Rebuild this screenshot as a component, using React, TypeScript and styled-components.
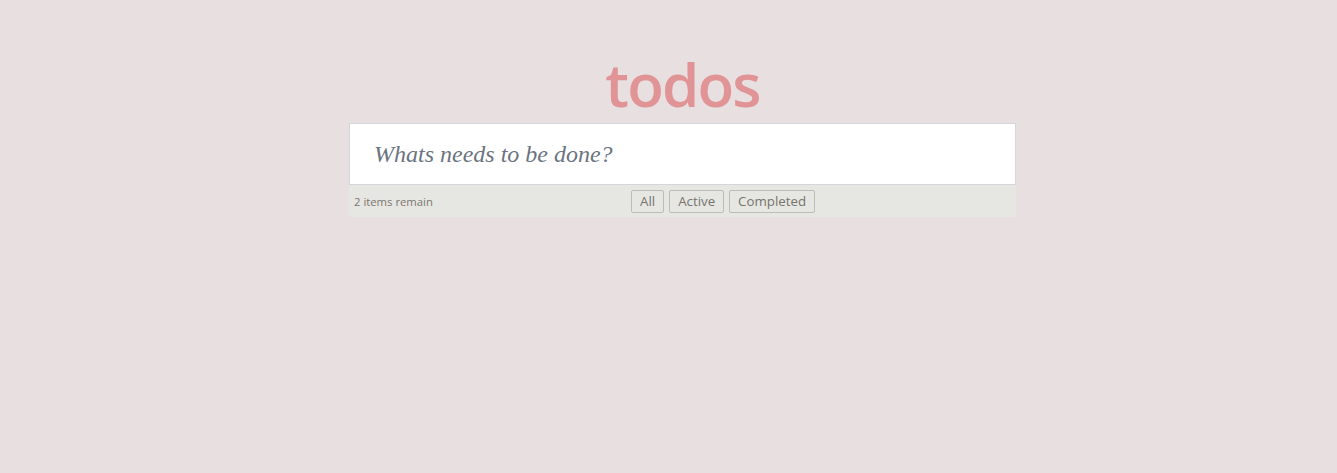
import React from 'react';
import styled, { createGlobalStyle } from 'styled-components';

const GlobalStyle = createGlobalStyle`
  html, body {
    margin: 0;
    padding: 0;
    background: #e8dfe1;
  }
`;

const Page = styled.div`
  min-height: 100vh;
  display: flex;
  flex-direction: column;
  align-items: center;
  padding: 48px 0 0 28px;
  box-sizing: border-box;
  font-family: 'Open Sans', 'Noto Sans', sans-serif;
`;

const Title = styled.h1`
  margin: 0 0 3px 0;
  font-size: 60px;
  font-weight: 600;
  line-height: 72px;
  color: #e09496;
  letter-spacing: -1.8px;
`;

const Card = styled.div`
  width: 667px;
`;

const NewTodo = styled.input`
  display: block;
  width: 100%;
  height: 62px;
  box-sizing: border-box;
  border: 1px solid #d3d6db;
  background: #fff;
  padding: 0 24px;
  font-family: 'Liberation Serif', 'DejaVu Serif', serif;
  font-style: italic;
  font-size: 24px;
  color: #5f6b78;
  outline: none;

  &::placeholder {
    color: #6b7480;
    opacity: 1;
  }
`;

const Footer = styled.div`
  display: flex;
  align-items: center;
  height: 32px;
  padding: 0 5px;
  background: #e6e6e2;
`;

const Count = styled.span`
  width: 277px;
  font-size: 11.3px;
  color: #7b7770;
`;

const Filters = styled.div`
  display: flex;
  gap: 5px;
`;

const FilterButton = styled.button`
  height: 23px;
  padding: 0 8px;
  border: 1px solid #bdbdb8;
  border-radius: 2px;
  background: transparent;
  font-family: 'Open Sans', 'Noto Sans', sans-serif;
  font-size: 13.3px;
  color: #77746e;
  cursor: pointer;
`;

const App = () => {
  const filters = ['All', 'Active', 'Completed'];
  return (
    <>
      <GlobalStyle />
      <Page>
        <Title>todos</Title>
        <Card>
          <NewTodo placeholder="Whats needs to be done?" />
          <Footer>
            <Count>2 items remain</Count>
            <Filters>
              {filters.map(f => (
                <FilterButton key={f}>{f}</FilterButton>
              ))}
            </Filters>
          </Footer>
        </Card>
      </Page>
    </>
  );
};

export default App;
